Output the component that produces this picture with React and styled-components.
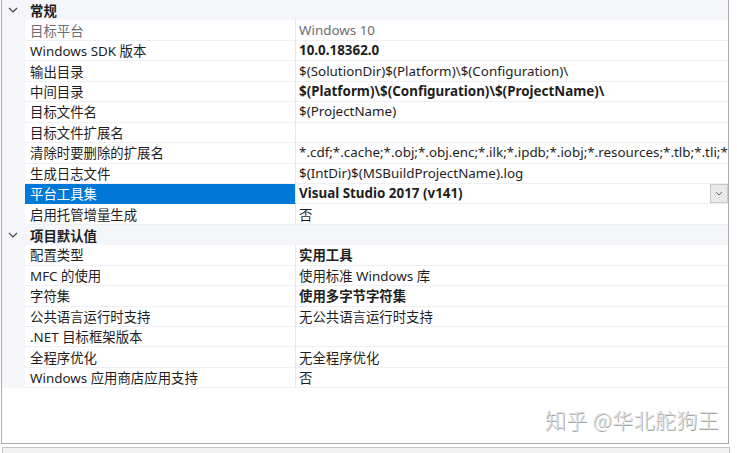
import React from "react";
import styled, { createGlobalStyle } from "styled-components";

const Global = createGlobalStyle`
  html, body { margin: 0; padding: 0; background: #ffffff; }
  body { font-family: "Noto Sans", "Noto Sans CJK SC", sans-serif; }
`;

const Frame = styled.div`
  width: 737px;
  height: 453px;
  overflow: hidden;
  display: flex;
  flex-direction: column;
  background: #ffffff;
`;

const Panel = styled.div`
  position: relative;
  margin-left: 1px;
  width: 728px;
  height: 444px;
  border-left: 1px solid #a9a9a9;
  border-right: 1px solid #a9a9a9;
  border-bottom: 1px solid #a9a9a9;
  box-sizing: border-box;
  background: #ffffff;
`;

const Grid = styled.div`
  display: grid;
  grid-template-columns: 23px 271px 1fr;
  grid-auto-rows: 20.44px;
`;

const Header = styled.div`
  grid-column: 1 / 4;
  display: flex;
  align-items: center;
  padding-bottom: 1px;
  box-sizing: border-box;
  background: #f5f6fa;
  font-weight: 700;
  font-size: 13.4px;
  color: #1e1e1e;
`;

const Chevron = styled.span`
  width: 23px;
  display: flex;
  justify-content: center;
  align-items: center;
  padding-right: 3px;
  box-sizing: border-box;
  margin-left: 1px;
`;

const HeaderText = styled.span`
  padding-left: 4px;
`;

const Gutter = styled.div`
  background: #f5f6fa;
`;

const Name = styled.div`
  display: flex;
  align-items: center;
  padding-left: 5px;
  padding-bottom: 1px;
  font-size: 13.4px;
  white-space: nowrap;
  overflow: hidden;
  box-sizing: border-box;
  border-bottom: 1px solid ${(p) => (p.$sel ? "#0078d7" : "#eef0f3")};
  border-right: 1px solid #e6e7ea;
  background: ${(p) => (p.$sel ? "#0078d7" : "#ffffff")};
  color: ${(p) => (p.$sel ? "#ffffff" : p.$dim ? "#6d6d6d" : "#1e1e1e")};
`;

const Value = styled.div`
  display: flex;
  align-items: center;
  justify-content: space-between;
  padding-left: 3px;
  font-size: 13.4px;
  white-space: nowrap;
  overflow: hidden;
  box-sizing: border-box;
  border-bottom: 1px solid #eef0f3;
  font-weight: ${(p) => (p.$bold ? 700 : 400)};
  color: ${(p) => (p.$dim ? "#6d6d6d" : "#1e1e1e")};
`;

const ValueText = styled.span`
  padding-bottom: 1px;
`;

const DropButton = styled.div`
  width: 18px;
  height: 19px;
  box-sizing: border-box;
  border: 1px solid #c9c9c9;
  background: #e9e9e9;
  display: flex;
  align-items: center;
  justify-content: center;
  flex-shrink: 0;
`;

const Watermark = styled.div`
  position: absolute;
  right: 9px;
  bottom: 9px;
  font-family: "Noto Sans CJK SC", sans-serif;
  font-weight: 300;
  font-size: 21px;
  color: #e0e0e0;
  text-shadow: 1px 1px 0 #a8a8a8, -1px -1px 0 #ffffff;
  letter-spacing: 0.4px;
`;

const BottomBar = styled.div`
  margin-top: 3px;
  margin-left: 2px;
  width: 728px;
  flex: 1;
  border: 1px solid #c4c4c4;
  border-bottom: none;
  background: #f2f2f2;
  box-sizing: border-box;
`;

const ChevronIcon = () => (
  <svg width="10" height="6" viewBox="0 0 10 6">
    <path d="M1 1 L5 5 L9 1" fill="none" stroke="#444444" strokeWidth="1.2" />
  </svg>
);

const SmallChevron = () => (
  <svg width="8" height="5" viewBox="0 0 8 5">
    <path d="M1 1 L4 4 L7 1" fill="none" stroke="#6a6a6a" strokeWidth="1" />
  </svg>
);

const sections = [
  {
    title: "常规",
    rows: [
      { n: "目标平台", v: "Windows 10", dim: true },
      { n: "Windows SDK 版本", v: "10.0.18362.0", bold: true },
      { n: "输出目录", v: "$(SolutionDir)$(Platform)\\$(Configuration)\\" },
      { n: "中间目录", v: "$(Platform)\\$(Configuration)\\$(ProjectName)\\", bold: true },
      { n: "目标文件名", v: "$(ProjectName)" },
      { n: "目标文件扩展名", v: "" },
      {
        n: "清除时要删除的扩展名",
        v: "*.cdf;*.cache;*.obj;*.obj.enc;*.ilk;*.ipdb;*.iobj;*.resources;*.tlb;*.tli;*",
      },
      { n: "生成日志文件", v: "$(IntDir)$(MSBuildProjectName).log" },
      { n: "平台工具集", v: "Visual Studio 2017 (v141)", bold: true, sel: true },
      { n: "启用托管增量生成", v: "否" },
    ],
  },
  {
    title: "项目默认值",
    rows: [
      { n: "配置类型", v: "实用工具", bold: true },
      { n: "MFC 的使用", v: "使用标准 Windows 库" },
      { n: "字符集", v: "使用多字节字符集", bold: true },
      { n: "公共语言运行时支持", v: "无公共语言运行时支持" },
      { n: ".NET 目标框架版本", v: "" },
      { n: "全程序优化", v: "无全程序优化" },
      { n: "Windows 应用商店应用支持", v: "否" },
    ],
  },
];

export default function App() {
  return (
    <>
      <Global />
      <Frame>
        <Panel>
          <Grid>
            {sections.map((s) => (
              <React.Fragment key={s.title}>
                <Header>
                  <Chevron>
                    <ChevronIcon />
                  </Chevron>
                  <HeaderText>{s.title}</HeaderText>
                </Header>
                {s.rows.map((r) => (
                  <React.Fragment key={r.n}>
                    <Gutter />
                    <Name $sel={r.sel} $dim={r.dim}>
                      {r.n}
                    </Name>
                    <Value $bold={r.bold} $dim={r.dim}>
                      <ValueText>{r.v}</ValueText>
                      {r.sel && (
                        <DropButton>
                          <SmallChevron />
                        </DropButton>
                      )}
                    </Value>
                  </React.Fragment>
                ))}
              </React.Fragment>
            ))}
          </Grid>
          <Watermark>知乎 @华北舵狗王</Watermark>
        </Panel>
        <BottomBar />
      </Frame>
    </>
  );
}
